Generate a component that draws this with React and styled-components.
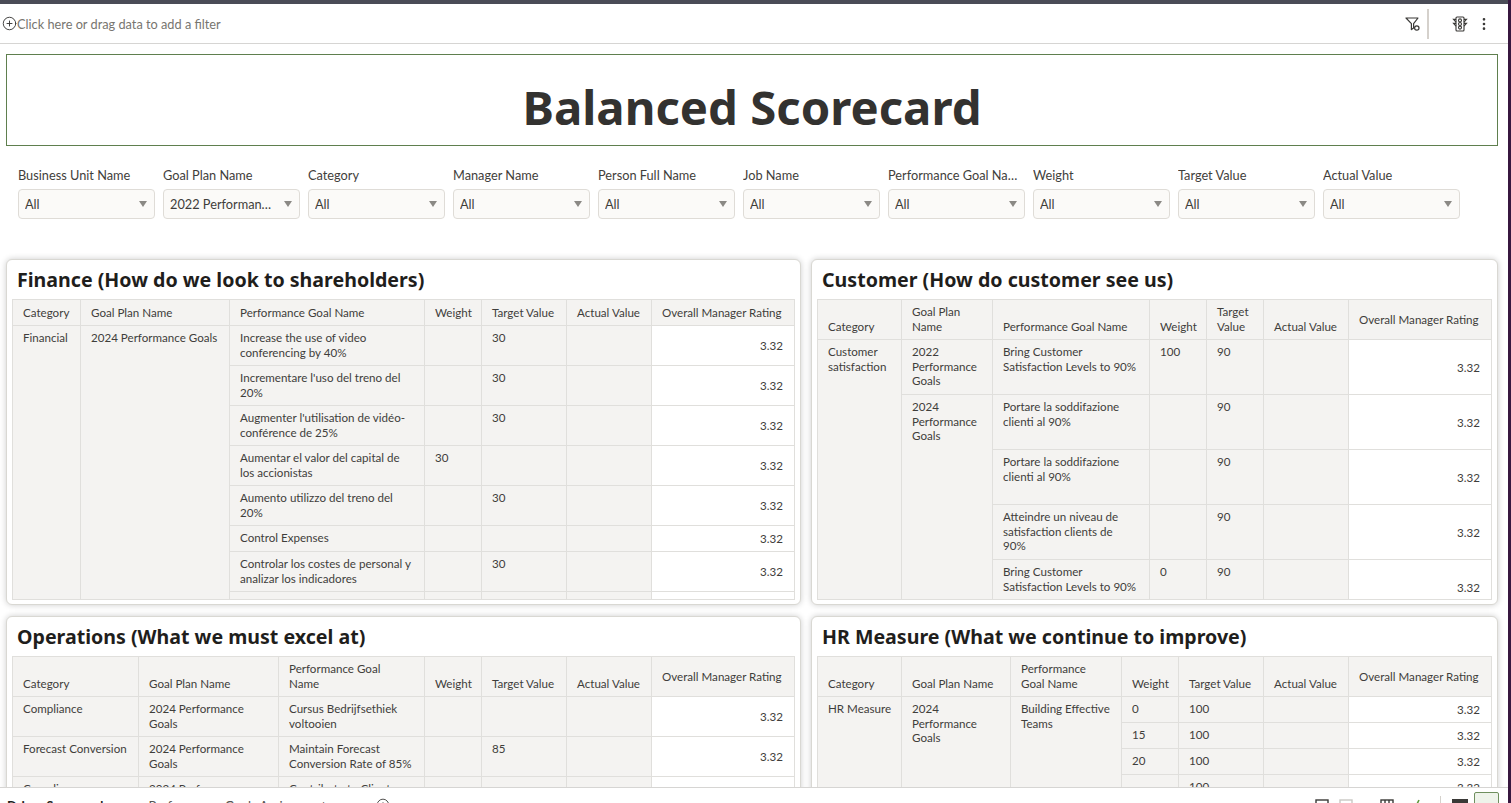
import React from "react";
import styled, { createGlobalStyle } from "styled-components";
import { CirclePlus, EllipsisVertical } from "lucide-react";

const GlobalStyle = createGlobalStyle`
  html, body {
    margin: 0;
    padding: 0;
    background: #fff;
    overflow: hidden;
  }
  body {
    font-family: Lato, "Noto Sans", sans-serif;
    color: #3a3937;
  }
`;

const Page = styled.div`
  width: 1511px;
  height: 803px;
  box-sizing: border-box;
  border-right: 3px solid #37173f;
  display: flex;
  flex-direction: column;
  overflow: hidden;
`;

const TopStrip = styled.div`
  flex: none;
  height: 4px;
  background: #4a4c57;
`;

const FilterBar = styled.div`
  flex: none;
  height: 40px;
  box-sizing: border-box;
  border-bottom: 1px solid #d6d5d3;
  display: flex;
  align-items: center;
  padding: 0 16px 0 2px;
  color: #3a3937;
`;

const FilterHint = styled.span`
  font-size: 12.75px;
  color: #77756f;
  flex: 1;
`;

const BarDivider = styled.div`
  width: 2px;
  height: 30px;
  background: #d5d1cc;
  margin: 0 23px 0 6px;
`;

const Content = styled.main`
  flex: 1;
  min-height: 0;
  overflow: hidden;
  padding: 10px 10px 0 6px;
`;

const TitleBox = styled.div`
  height: 92px;
  box-sizing: border-box;
  border: 1px solid #5f7f4e;
  padding-top: 14px;
  display: flex;
  align-items: center;
  justify-content: center;
`;

const PageTitle = styled.h1`
  margin: 0;
  font-family: "Noto Sans", sans-serif;
  font-size: 47.3px;
  font-weight: 700;
  color: #333230;
  line-height: 1;
`;

const Filters = styled.div`
  display: flex;
  gap: 8px;
  padding: 20px 0 0 12px;
  height: 113px;
  box-sizing: border-box;
`;

const FilterItem = styled.div`
  width: 137px;
`;

const FilterLabel = styled.div`
  font-size: 12.75px;
  line-height: 18px;
  margin-bottom: 5px;
  padding-right: 6px;
  color: #3f3e3b;
  white-space: nowrap;
  overflow: hidden;
  text-overflow: ellipsis;
`;

const SelectBox = styled.div`
  height: 30px;
  box-sizing: border-box;
  border: 1px solid #dfdcd7;
  border-radius: 4px;
  background: #fbfaf8;
  display: flex;
  align-items: center;
  padding: 0 7px 0 6px;
  font-size: 12.75px;
  color: #3f3e3b;
`;

const SelectText = styled.span`
  flex: 1;
  min-width: 0;
  white-space: nowrap;
  overflow: hidden;
  text-overflow: ellipsis;
  padding-right: 8px;
`;

const Caret = styled.span`
  flex: none;
  width: 0;
  height: 0;
  border-left: 4.5px solid transparent;
  border-right: 4.5px solid transparent;
  border-top: 6px solid #8b8985;
`;

const CardGrid = styled.div`
  display: grid;
  grid-template-columns: 795px 687px;
  grid-auto-rows: 346px;
  gap: 10px;
  row-gap: 11px;
`;

const Card = styled.section`
  box-sizing: border-box;
  border: 1px solid #d9d8d3;
  border-radius: 6px;
  background: #fff;
  box-shadow: 0 0 6px rgba(0, 0, 0, 0.2);
  padding: 0 5px 4px;
  display: flex;
  flex-direction: column;
  min-height: 0;
`;

const CardTitle = styled.h2`
  flex: none;
  margin: 0;
  height: 39px;
  padding-left: 5px;
  font-family: "Noto Sans", sans-serif;
  font-size: 19.6px;
  line-height: 39px;
  font-weight: 700;
  color: #1f1e1c;
  white-space: nowrap;
`;

const TableWrap = styled.div`
  flex: 1;
  min-height: 0;
  overflow: hidden;
  border: 1px solid #e0dfdc;
`;

const Table = styled.table`
  table-layout: fixed;
  border-collapse: separate;
  border-spacing: 0;
  width: ${(p) => p.$width}px;
  font-size: 11.6px;
  line-height: 14.5px;
  color: #3f3e3b;
`;

const Row = styled.tr`
  height: ${(p) => p.$h}px;
`;

const Cell = styled.td`
  box-sizing: border-box;
  background: #f4f3f1;
  border-right: 1px solid #e0dfdc;
  border-bottom: 1px solid #e0dfdc;
  padding: 5px 8px 5px 10px;
  vertical-align: top;
  text-align: left;
  font-weight: 400;
  white-space: pre-line;
`;

const HeadCell = styled(Cell).attrs({ as: "th" })`
  vertical-align: bottom;
`;

const RatingHead = styled(HeadCell)`
  vertical-align: middle;
  border-right: 0;
  padding: 6px 8px 4px 10px;
`;

const RatingCell = styled(Cell)`
  background: #fff;
  border-right: 0;
  text-align: right;
  vertical-align: middle;
  padding: 6px 11px 4px 10px;
`;

const BottomBar = styled.footer`
  flex: none;
  height: 16px;
  box-sizing: border-box;
  border-top: 1px solid #d6d5d3;
  background: #fff;
  overflow: hidden;
  display: flex;
  align-items: flex-start;
  padding-left: 7px;
  font-size: 13px;
  line-height: 16px;
`;

const Tab = styled.span`
  padding-top: 10px;
  font-weight: ${(p) => (p.$active ? 700 : 400)};
  color: ${(p) => (p.$active ? "#1f1e1c" : "#55534f")};
  margin-right: ${(p) => p.$gap}px;
  white-space: nowrap;
`;

const AddTab = styled.span`
  padding-top: 10px;
  color: #3a3937;
`;

const ViewTools = styled.div`
  margin-left: auto;
  display: flex;
  align-items: flex-start;
  padding-right: 9px;
`;

const ToolIcon = styled.svg`
  display: block;
  margin-top: 11px;
  margin-left: ${(p) => p.$gap}px;
`;

const ToolDivider = styled.div`
  width: 1px;
  height: 14px;
  margin: 8px 0 0 20px;
  background: #d5d1cc;
`;

const ActiveTool = styled.div`
  width: 25px;
  height: 20px;
  margin: 4px 0 0 6px;
  box-sizing: border-box;
  border: 1px solid #6f8f5e;
  border-radius: 2px;
  background: #eef3ea;
  display: flex;
  justify-content: center;
`;

const filters = [
  ["Business Unit Name", "All"],
  ["Goal Plan Name", "2022 Performance Goals"],
  ["Category", "All"],
  ["Manager Name", "All"],
  ["Person Full Name", "All"],
  ["Job Name", "All"],
  ["Performance Goal Name", "All"],
  ["Weight", "All"],
  ["Target Value", "All"],
  ["Actual Value", "All"],
];

const PG24 = "2024 Performance Goals";

const cards = [
  {
    title: "Finance (How do we look to shareholders)",
    cols: [68, 149, 195, 57, 85, 85, 142],
    headH: 26,
    goalHead: "Performance Goal Name",
    rows: [
      { h: 40, cells: [{ t: "Financial", span: 8 }, { t: PG24, span: 8 }, { t: "Increase the use of video conferencing by 40%" }, {}, { t: "30" }, {}] },
      { h: 40, cells: [{ t: "Incrementare l'uso del treno del 20%" }, {}, { t: "30" }, {}] },
      { h: 40, cells: [{ t: "Augmenter l'utilisation de vidéo-conférence de 25%" }, {}, { t: "30" }, {}] },
      { h: 40, cells: [{ t: "Aumentar el valor del capital de los accionistas" }, { t: "30" }, {}, {}] },
      { h: 40, cells: [{ t: "Aumento utilizzo del treno del 20%" }, {}, { t: "30" }, {}] },
      { h: 26, cells: [{ t: "Control Expenses" }, {}, {}, {}] },
      { h: 40, cells: [{ t: "Controlar los costes de personal y analizar los indicadores" }, {}, { t: "30" }, {}] },
      { h: 40, cells: [{}, {}, {}, {}] },
    ],
  },
  {
    title: "Customer (How do customer see us)",
    cols: [84, 91, 157, 57, 57, 85, 142],
    headH: 40,
    goalHead: "Performance Goal Name",
    rows: [
      { h: 55, cells: [{ t: "Customer satisfaction", span: 5 }, { t: "2022 Performance Goals" }, { t: "Bring Customer Satisfaction Levels to 90%" }, { t: "100" }, { t: "90" }, {}] },
      { h: 55, cells: [{ t: PG24, span: 4 }, { t: "Portare la soddifazione clienti al 90%" }, {}, { t: "90" }, {}] },
      { h: 55, cells: [{ t: "Portare la soddifazione clienti al 90%" }, {}, { t: "90" }, {}] },
      { h: 55, cells: [{ t: "Atteindre un niveau de\nsatisfaction clients de\n90%" }, {}, { t: "90" }, {}] },
      { h: 55, cells: [{ t: "Bring Customer Satisfaction Levels to 90%" }, { t: "0" }, { t: "90" }, {}] },
    ],
  },
  {
    title: "Operations (What we must excel at)",
    cols: [126, 140, 146, 57, 85, 85, 142],
    headH: 40,
    goalHead: "Performance Goal\nName",
    rows: [
      { h: 40, cells: [{ t: "Compliance" }, { t: PG24 }, { t: "Cursus Bedrijfsethiek voltooien" }, {}, {}, {}] },
      { h: 40, cells: [{ t: "Forecast Conversion" }, { t: PG24 }, { t: "Maintain Forecast Conversion Rate of 85%" }, {}, { t: "85" }, {}] },
      { h: 40, cells: [{ t: "Compliance" }, { t: PG24 }, { t: "Contribute to Client Satisfaction" }, {}, {}, {}] },
    ],
  },
  {
    title: "HR Measure (What we continue to improve)",
    cols: [84, 109, 111, 57, 85, 85, 142],
    headH: 40,
    goalHead: "Performance\nGoal Name",
    rows: [
      { h: 26, cells: [{ t: "HR Measure", span: 4 }, { t: PG24, span: 4 }, { t: "Building Effective Teams", span: 4 }, { t: "0" }, { t: "100" }, {}] },
      { h: 26, cells: [{ t: "15" }, { t: "100" }, {}] },
      { h: 26, cells: [{ t: "20" }, { t: "100" }, {}] },
      { h: 26, cells: [{}, { t: "100" }, {}] },
    ],
  },
];

function FilterFunnelIcon() {
  return (
    <svg width="16" height="16" viewBox="0 0 16 16" fill="none" stroke="#3a3937" strokeWidth="1.2">
      <path d="M1 2h12L8.6 7.6V12L6.4 13.6V7.6z" strokeLinejoin="round" />
      <circle cx="11.8" cy="12" r="2.2" fill="#fff" />
    </svg>
  );
}

function TrafficLightIcon() {
  return (
    <svg width="16" height="16" viewBox="0 0 16 16" fill="none" stroke="#3a3937" strokeWidth="1.1">
      <rect x="4" y="1" width="8" height="14" rx="1" />
      <circle cx="8" cy="4.4" r="1.5" />
      <circle cx="8" cy="8" r="1.5" />
      <circle cx="8" cy="11.6" r="1.5" />
      <path d="M4 3.4H1.5L4 6.2M12 3.4h2.5L12 6.2M4 7.4H1.5L4 10.2M12 7.4h2.5L12 10.2" />
    </svg>
  );
}

function ScoreTable({ card }) {
  const width = card.cols.reduce((a, b) => a + b, 0);
  const headers = ["Category", "Goal Plan Name", card.goalHead, "Weight", "Target Value", "Actual Value"];
  return (
    <TableWrap>
      <Table $width={width}>
        <colgroup>
          {card.cols.map((w, i) => (
            <col key={i} width={w} />
          ))}
        </colgroup>
        <thead>
          <Row $h={card.headH}>
            {headers.map((h) => (
              <HeadCell key={h}>{h}</HeadCell>
            ))}
            <RatingHead>Overall Manager Rating</RatingHead>
          </Row>
        </thead>
        <tbody>
          {card.rows.map((row, i) => (
            <Row key={i} $h={row.h}>
              {row.cells.map((c, j) => (
                <Cell key={j} rowSpan={c.span}>
                  {c.t}
                </Cell>
              ))}
              <RatingCell>3.32</RatingCell>
            </Row>
          ))}
        </tbody>
      </Table>
    </TableWrap>
  );
}

export default function App() {
  return (
    <>
      <GlobalStyle />
      <Page>
        <TopStrip />
        <FilterBar>
          <CirclePlus size={15} strokeWidth={1.5} />
          <FilterHint>Click here or drag data to add a filter</FilterHint>
          <FilterFunnelIcon />
          <BarDivider />
          <TrafficLightIcon />
          <EllipsisVertical size={16} strokeWidth={2} style={{ marginLeft: 8 }} />
        </FilterBar>
        <Content>
          <TitleBox>
            <PageTitle>Balanced Scorecard</PageTitle>
          </TitleBox>
          <Filters>
            {filters.map(([label, value]) => (
              <FilterItem key={label}>
                <FilterLabel>{label}</FilterLabel>
                <SelectBox>
                  <SelectText>{value}</SelectText>
                  <Caret />
                </SelectBox>
              </FilterItem>
            ))}
          </Filters>
          <CardGrid>
            {cards.map((card) => (
              <Card key={card.title}>
                <CardTitle>{card.title}</CardTitle>
                <ScoreTable card={card} />
              </Card>
            ))}
          </CardGrid>
        </Content>
        <BottomBar>
          <Tab $active $gap={45}>Driver Scorecard</Tab>
          <Tab $gap={50}>Performance Goals Assignment</Tab>
          <AddTab>
            <CirclePlus size={14} strokeWidth={1.5} />
          </AddTab>
          <ViewTools>
            <ToolIcon $gap={0} width="14" height="14" viewBox="0 0 14 14" fill="none" stroke="#3a3937" strokeWidth="1.4">
              <rect x="1" y="1" width="12" height="12" />
            </ToolIcon>
            <ToolIcon $gap={10} width="14" height="14" viewBox="0 0 14 14" fill="none" stroke="#c9c8c4" strokeWidth="1.4">
              <rect x="1" y="1" width="12" height="12" />
            </ToolIcon>
            <ToolIcon $gap={27} width="14" height="14" viewBox="0 0 14 14" fill="none" stroke="#3a3937" strokeWidth="1.4">
              <rect x="1" y="1" width="12" height="12" />
              <path d="M5 1v12M9 1v12" />
            </ToolIcon>
            <ToolIcon $gap={16} width="10" height="14" viewBox="0 0 10 14" fill="none" stroke="#5f9a3c" strokeWidth="1.6">
              <path d="M1 8l3 3 5-10" />
            </ToolIcon>
            <ToolDivider />
            <ToolIcon $gap={11} width="16" height="14" viewBox="0 0 16 14" fill="#3a3937">
              <rect width="16" height="14" />
            </ToolIcon>
            <ActiveTool>
              <ToolIcon $gap={0} width="16" height="14" viewBox="0 0 16 14" fill="#c4d6b8" stroke="#6f8f5e">
                <rect x="0.5" y="0.5" width="15" height="13" />
              </ToolIcon>
            </ActiveTool>
          </ViewTools>
        </BottomBar>
      </Page>
    </>
  );
}
